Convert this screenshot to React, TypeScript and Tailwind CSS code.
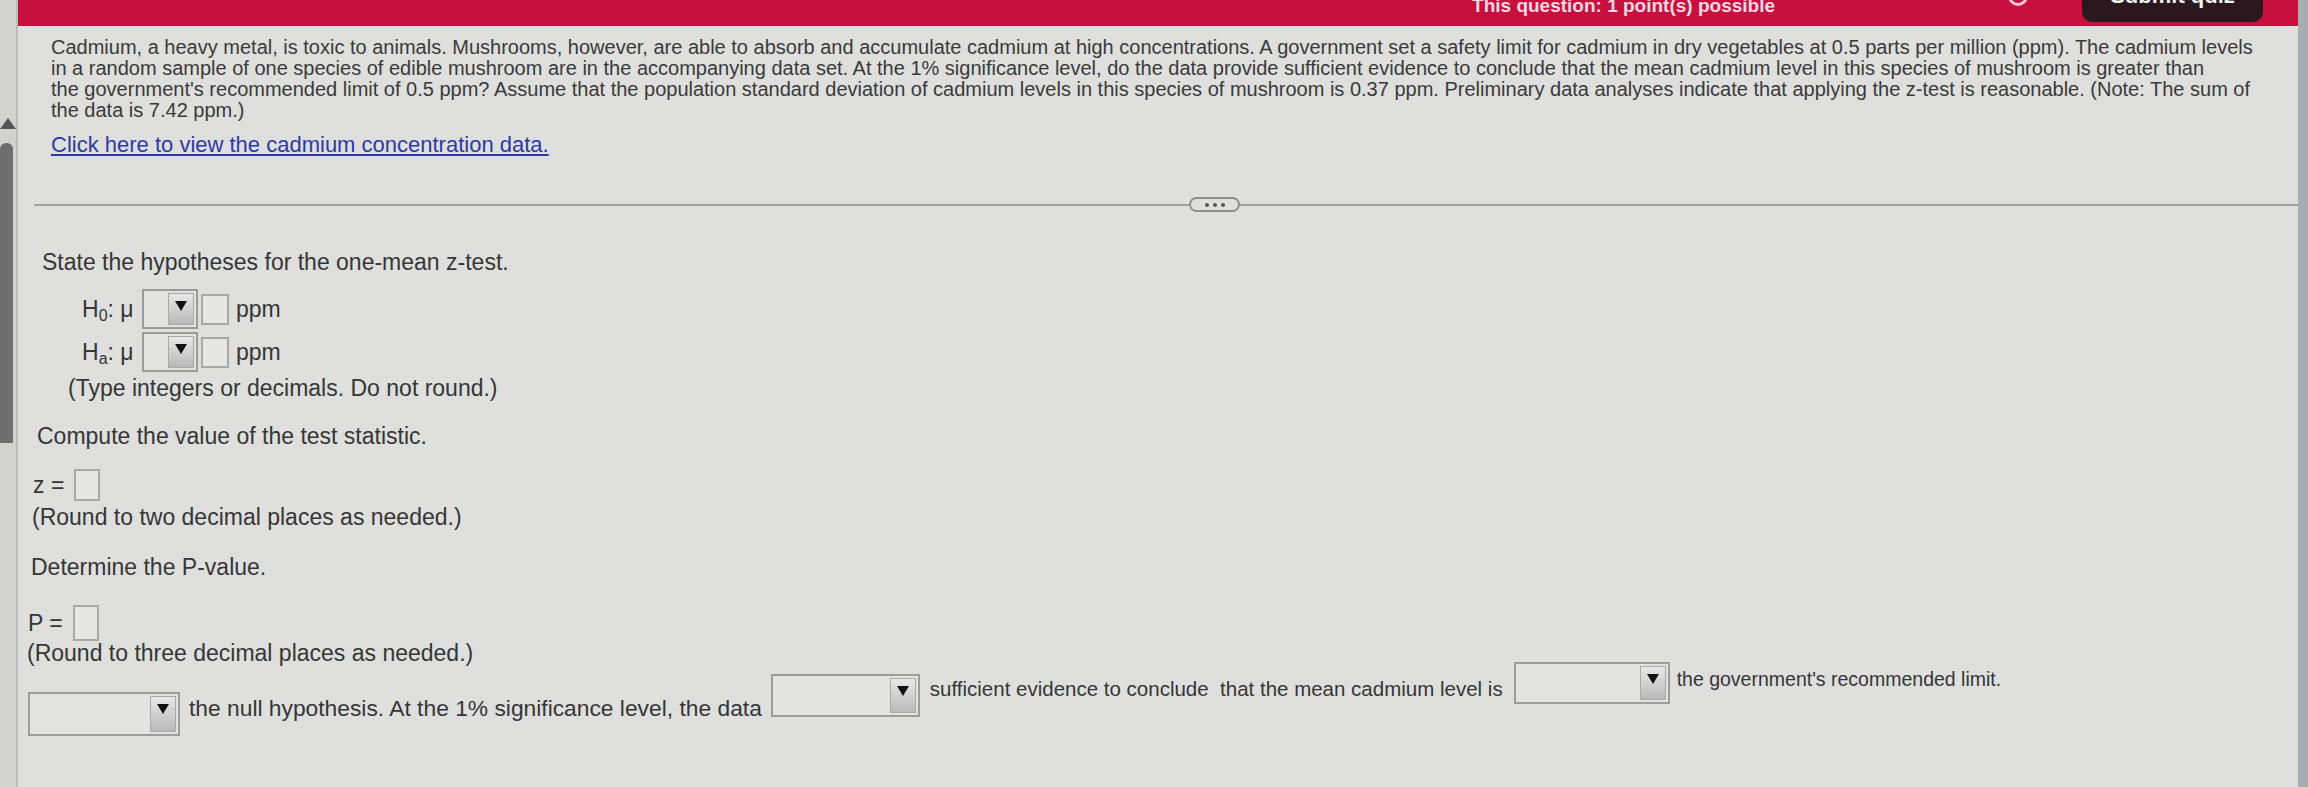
import React from "react";

const textFont = { fontFamily: '"Liberation Sans", Arial, sans-serif' };

function Caret() {
  return (
    <svg width="14" height="12" viewBox="0 0 14 12" className="block">
      <path d="M1 1 L13 1 L7 11 Z" fill="#111" />
    </svg>
  );
}

function Dropdown({ w, h }: { w: string; h: string }) {
  return (
    <div className={`flex justify-end items-stretch border-2 border-[#9c9c9c] bg-[#e3e3e1] ${w} ${h}`}>
      <div className="w-[26px] my-[2px] mr-[2px] flex justify-center pt-[6px] bg-gradient-to-b from-[#e8e8e8] to-[#b9b9b9] border border-[#a9a9a9]">
        <Caret />
      </div>
    </div>
  );
}

function Box({ cls }: { cls: string }) {
  return <div className={`border-2 border-[#a8a8a8] bg-[#e6e6e4] ${cls}`} />;
}

export default function App() {
  return (
    <div className="w-[2308px] h-[787px] overflow-hidden bg-[#dfdfdd] flex text-[#333]" style={textFont}>
      {/* left scroll strip */}
      <div className="w-[18px] shrink-0 flex flex-col items-start bg-[#d2d2d0] border-r-2 border-[#bdbdbb]">
        <div className="h-[118px]" />
        <div className="w-0 h-0 border-l-[8px] border-r-[8px] border-b-[11px] border-l-transparent border-r-transparent border-b-[#555]" />
        <div className="mt-[14px] w-[13px] h-[300px] rounded-t-[6px] bg-[#6e6e6e]" />
      </div>

      <div className="flex-1 flex flex-col min-w-0">
        {/* header */}
        <div className="h-[26px] shrink-0 bg-[#c8103f] flex items-start justify-end pr-[35px] overflow-hidden">
          <div className="shrink-0 whitespace-nowrap -mt-[4px] text-[19px] font-bold text-[#f6d8e1] leading-[19px]">
            This question: 1 point(s) possible
          </div>
          <div className="shrink-0 ml-[233px] -mt-[14px] w-[20px] h-[20px] rounded-full border-[3px] border-[#f3c9d5]" />
          <div className="shrink-0 ml-[54px] -mt-[10px] w-[181px] h-[32px] rounded-[10px] bg-[#2a181e] flex justify-center items-start overflow-hidden">
            <span className="whitespace-nowrap text-[22px] font-bold text-[#f2f2f2] leading-[20px] -mt-[4px]">Submit quiz</span>
          </div>
        </div>

        {/* question text */}
        <div className="pl-[33px] pt-[11px] text-[20px] leading-[21px] text-[#3a3a3a]">
          <p className="whitespace-nowrap">
            Cadmium, a heavy metal, is toxic to animals. Mushrooms, however, are able to absorb and accumulate cadmium at high concentrations. A government set a safety limit for cadmium in dry vegetables at 0.5 parts per million (ppm). The cadmium levels
            <br />
            in a random sample of one species of edible mushroom are in the accompanying data set. At the 1% significance level, do the data provide sufficient evidence to conclude that the mean cadmium level in this species of mushroom is greater than
            <br />
            the government&apos;s recommended limit of 0.5 ppm? Assume that the population standard deviation of cadmium levels in this species of mushroom is 0.37 ppm. Preliminary data analyses indicate that applying the z-test is reasonable. (Note: The sum of
            <br />
            the data is 7.42 ppm.)
          </p>
          <a className="block mt-[12px] text-[22px] leading-[24px] text-[#2d3aa6] underline decoration-[#2d3aa6] underline-offset-2 w-fit">
            Click here to view the cadmium concentration data.
          </a>
        </div>

        {/* separator */}
        <div className="mt-[40px] ml-[16px] flex items-center">
          <div className="w-[1155px] h-[2px] bg-[#a3a3a1]" />
          <div className="w-[51px] h-[15px] rounded-full border-2 border-[#8d8d8d] flex items-center justify-center gap-[4px]">
            <span className="w-[4px] h-[4px] rounded-full bg-[#555]" />
            <span className="w-[4px] h-[4px] rounded-full bg-[#555]" />
            <span className="w-[4px] h-[4px] rounded-full bg-[#555]" />
          </div>
          <div className="flex-1 h-[2px] bg-[#a3a3a1]" />
        </div>

        {/* answers */}
        <div className="flex flex-col text-[23px] leading-[24px] text-[#363636]">
          <div className="mt-[38px] ml-[24px]">State the hypotheses for the one-mean z-test.</div>

          <div className="mt-[15px] ml-[64px] flex items-center">
            <span className="w-[60px]">
              H<sub className="text-[16px]">0</sub>: μ
            </span>
            <Dropdown w="w-[56px]" h="h-[40px]" />
            <Box cls="ml-[3px] w-[28px] h-[31px]" />
            <span className="ml-[7px]">ppm</span>
          </div>
          <div className="mt-[3px] ml-[64px] flex items-center">
            <span className="w-[60px]">
              H<sub className="text-[16px]">a</sub>: μ
            </span>
            <Dropdown w="w-[56px]" h="h-[40px]" />
            <Box cls="ml-[3px] w-[28px] h-[31px]" />
            <span className="ml-[7px]">ppm</span>
          </div>
          <div className="mt-[4px] ml-[50px]">(Type integers or decimals. Do not round.)</div>

          <div className="mt-[24px] ml-[19px]">Compute the value of the test statistic.</div>

          <div className="mt-[21px] ml-[15px] flex items-center gap-[10px]">
            <span>z =</span>
            <Box cls="w-[26px] h-[32px]" />
          </div>
          <div className="mt-[4px] ml-[14px]">(Round to two decimal places as needed.)</div>

          <div className="mt-[26px] ml-[13px]">Determine the P-value.</div>

          <div className="mt-[26px] ml-[10px] flex items-center gap-[10px]">
            <span>P =</span>
            <Box cls="w-[26px] h-[36px]" />
          </div>
          <div className="ml-[9px]">(Round to three decimal places as needed.)</div>

          <div className="-mt-[5px] ml-[10px] flex items-start">
            <div className="mt-[32px]">
              <Dropdown w="w-[152px]" h="h-[44px]" />
            </div>
            <span className="mt-[34px] ml-[9px] text-[22.8px] leading-[28px]">
              the null hypothesis. At the 1% significance level, the data
            </span>
            <div className="mt-[14px] ml-[9px]">
              <Dropdown w="w-[149px]" h="h-[43px]" />
            </div>
            <span className="mt-[15px] ml-[10px] text-[20.5px] leading-[28px]">
              sufficient evidence to conclude&nbsp; that the mean cadmium level is
            </span>
            <div className="mt-[2px] ml-[11px]">
              <Dropdown w="w-[156px]" h="h-[42px]" />
            </div>
            <span className="mt-[5px] ml-[7px] text-[19.5px] leading-[28px]">
              the government&apos;s recommended limit.
            </span>
          </div>
        </div>
      </div>

      {/* right edge */}
      <div className="w-[10px] shrink-0 bg-[#a9adb1]" />
    </div>
  );
}
